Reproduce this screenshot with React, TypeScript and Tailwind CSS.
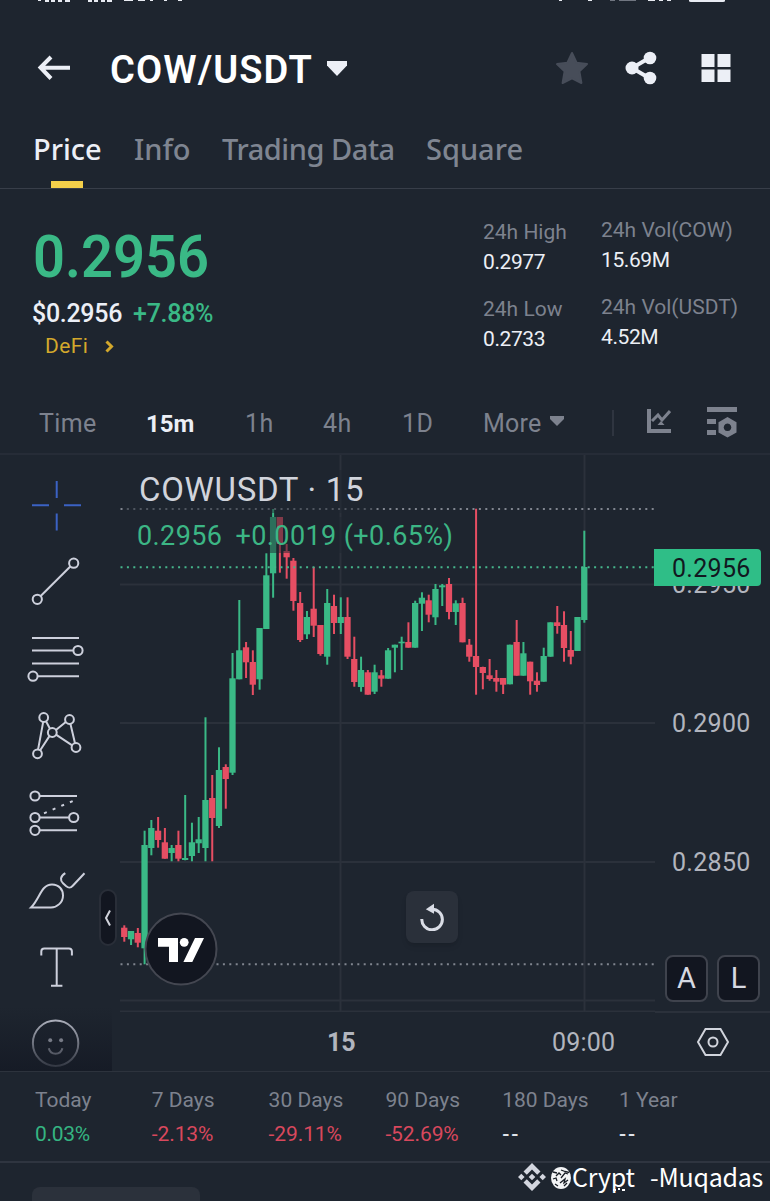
import { ReactNode } from "react";

// high, low, body top, body bottom, direction (1 = up)
const candles = [
  [925.3, 941.7, 927.7, 937, 0],
  [931, 945, 931, 939.3, 1],
  [928, 947.3, 933, 942.7, 0],
  [830.7, 964.3, 845, 948.3, 1],
  [820, 855.3, 828, 848, 1],
  [817, 847.7, 830.7, 840, 0],
  [828, 858.7, 842.3, 858.7, 0],
  [845, 861.3, 848, 853, 1],
  [830.7, 861.3, 845, 858.7, 0],
  [795, 860.3, 858, 860, 1],
  [822.7, 861.3, 842.3, 856, 1],
  [817, 853, 839.3, 843.3, 1],
  [717.3, 861.3, 800, 848, 1],
  [775, 861.3, 798, 818, 0],
  [747.3, 828, 770, 826, 1],
  [764.3, 808.7, 767, 779, 0],
  [653, 775, 678.3, 772.7, 1],
  [600, 679.3, 650.3, 679.3, 1],
  [642, 678, 647.3, 662.3, 0],
  [650.3, 695, 662, 684.7, 0],
  [628, 689.7, 628, 679.3, 1],
  [553.3, 629, 575.3, 629, 1],
  [509, 597.7, 517, 573.3, 1],
  [517, 572.7, 517, 544, 0],
  [544, 578.7, 551, 557.3, 0],
  [558, 610.7, 560.7, 601, 0],
  [592, 642, 603, 640, 0],
  [611, 639, 617, 634.3, 1],
  [567, 637, 608.7, 625.7, 0],
  [625, 655.7, 625, 654, 0],
  [589, 664.7, 603, 656.7, 1],
  [594.7, 634, 606, 623, 0],
  [597.3, 634, 617, 623, 1],
  [597.3, 659, 617, 656.7, 0],
  [636.7, 686.7, 659, 682, 0],
  [656.7, 691.7, 670, 687, 1],
  [670, 694.7, 672.3, 694.7, 0],
  [664.7, 694, 672.3, 691.7, 1],
  [670, 686.7, 675.3, 678.7, 0],
  [648, 678.7, 650.3, 678.7, 1],
  [644.7, 672.3, 644.7, 647.7, 1],
  [636.7, 670, 641.7, 643.3, 1],
  [622.3, 647.7, 642, 647.7, 0],
  [600.7, 647.7, 603, 647.7, 1],
  [592.3, 631, 597.7, 603.7, 1],
  [594.7, 622.3, 600.3, 614.7, 0],
  [584, 625, 589, 617.3, 1],
  [584, 606, 585.3, 587.3, 1],
  [578, 619.3, 584, 612, 0],
  [600.3, 625, 603.3, 612, 1],
  [597.7, 642.3, 603, 642.3, 0],
  [639, 661.7, 644.7, 656.7, 0],
  [508.7, 694.7, 656, 667, 0],
  [666.7, 689.3, 667, 673, 0],
  [659, 680.7, 675.3, 679, 0],
  [670, 691.7, 678, 681.7, 0],
  [678, 694, 678, 684.7, 0],
  [644.7, 684.3, 644.7, 684.3, 1],
  [620, 675.7, 642, 675.7, 0],
  [642, 675.7, 653.3, 675.7, 1],
  [661.7, 694.7, 661.7, 681.3, 0],
  [672.3, 691.7, 680.7, 685, 0],
  [647.7, 681.7, 656, 681.7, 1],
  [622.3, 656.7, 622.3, 656.7, 1],
  [606, 633.7, 622.3, 626, 0],
  [611.3, 661.7, 625, 648, 0],
  [631, 664.3, 650, 656.7, 0],
  [617, 651, 617, 651, 1],
  [530.7, 622.7, 567, 620, 1],
];

const changes = [
  { label: "Today", value: "0.03%", color: "tracking-[-0.3px] text-[#35b582]" },
  { label: "7 Days", value: "-2.13%", color: "tracking-[-0.1px] text-[#d9485d]" },
  { label: "30 Days", value: "-29.11%", color: "tracking-[-0.1px] text-[#d9485d]" },
  { label: "90 Days", value: "-52.69%", color: "tracking-[-0.1px] text-[#d9485d]" },
  { label: "180 Days", value: "--", color: "tracking-[2px] font-medium text-[#dfe3ea]" },
  { label: "1 Year", value: "--", color: "tracking-[2px] font-medium text-[#dfe3ea]" },
];

function Tool({ children }: { children: ReactNode }) {
  return (
    <svg
      viewBox="-56 -38.5 112 77"
      className="h-[77px] w-[112px] shrink-0 fill-none stroke-[#cdd0dc] stroke-2"
    >
      {children}
    </svg>
  );
}

function Toolbar() {
  return (
    <div className="relative flex w-[112px] shrink-0 flex-col overflow-hidden pt-[12px]">
      <Tool>
        <path d="M.7-24.5v17M.7 8v17M-24-.3h17M8-.3h17" className="stroke-[#3b62c4]" />
      </Tool>
      <Tool>
        <circle cx="17.7" cy="-19.3" r="4.6" />
        <circle cx="-18.7" cy="16.8" r="4.6" />
        <path d="M-15.3 13.500 14.3-16" />
      </Tool>
      <Tool>
        <path d="M-24-21.500H23M-24-9H17M-24 4H23M-18 16.700H23" />
        <circle cx="22" cy="-9" r="4.6" />
        <circle cx="-23" cy="16.700" r="4.6" />
      </Tool>
      <Tool>
        <circle cx="-12.3" cy="-19" r="4.4" />
        <circle cx="13.5" cy="-17" r="4.4" />
        <circle cx="-3.7" cy="-4" r="4.4" />
        <circle cx="20" cy="11" r="4.4" />
        <circle cx="-18.5" cy="17.3" r="4.4" />
        <path d="M-12.8-14.6-17.9 12.9M-10-15.2-6-7.8M-.1-6.5 9.8-14.6M14.4-12.7 19 6.7M16.2 8.8 0-1.8M-6.4-.6-15.8 13.8" />
      </Tool>
      <Tool>
        <circle cx="-21" cy="-17.5" r="4.6" />
        <circle cx="-21" cy="4" r="4.6" />
        <circle cx="17.7" cy="4" r="4.6" />
        <circle cx="-21" cy="16.8" r="4.6" />
        <path d="M-16.4-17.5H21M-16.4 4H13M-16.4 16.8H21" />
        <path d="M-12-.2 18-13" strokeDasharray="3 6.4" />
      </Tool>
      <Tool>
        <path d="M-25 17C-16 8-15-6-4-6 3-6 7-1 7 5 7 12 1 17-5 17Z" />
        <path d="M9.3-17.3C4-14 4-10 7-7.3L10-4.5C13-2 14.5-2.2 17-5L28.5-17.3" />
      </Tool>
      <Tool>
        <path d="M-14.7-12v-4q0-3 3-3h24.6q3 0 3 3v4M.7-19v37.3M-5 18.3H6.4" />
      </Tool>
      <Tool>
        <circle cx="-.4" cy="-1.3" r="22.7" />
        <path d="M-7.2 3.7C-5.5 11 4.6 11 6.4 3.7" />
        <circle cx="-5.8" cy="-4.3" r="2" className="fill-[#cdd0dc] stroke-none" />
        <circle cx="5.1" cy="-4.3" r="2" className="fill-[#cdd0dc] stroke-none" />
      </Tool>
      <div className="absolute inset-x-0 bottom-0 h-[64px] bg-linear-to-b from-[#151a25]/0 to-[#151a25]/90" />
    </div>
  );
}

function Plot() {
  return (
    <svg viewBox="112 455 543 557" className="block h-[557px] w-[543px]">
      <g className="fill-none stroke-[#2b313b] stroke-2">
        <path d="M120 584.5H655M120 723H655M120 862H655M120 1000.5H655M120 1011.5H655" />
        <path d="M340.5 455V1012M584.5 455V1012" />
      </g>
      <path d="M120.5 509H655M120.5 964.3H655" className="stroke-[#80858f] stroke-2" strokeDasharray="2 4.4" />
      {candles.map(([high, low, top, bottom, up], i) => (
        <g key={i} className={up ? "fill-[#3ab986]" : "fill-[#e64e63]"}>
          <rect x={123.3 + i * 6.765} y={high} width="2" height={low - high} />
          <rect x={121.1 + i * 6.765} y={top} width="6.3" height={bottom - top} />
        </g>
      ))}
      <path d="M120.5 567.2H655" className="stroke-[#46b68c] stroke-2" strokeDasharray="2 4.4" />
    </svg>
  );
}

function Chart() {
  return (
    <div className="relative flex h-[617px] border-b border-[#2d333d]">
      <Toolbar />
      <div className="relative w-[543px] shrink-0">
        <Plot />
        <div className="absolute left-[15px] top-[15px] h-[43px] w-[248px] bg-[#1e252f]/50 pl-[12px] text-[33px] leading-[40px] tracking-[0.7px] whitespace-pre text-[#d1d4dc]">
          COWUSDT · 15
        </div>
        <div className="absolute left-[15px] top-[62px] h-[36px] w-[335px] bg-[#1e252f]/50 pl-[10px] text-[27px] leading-[38px] tracking-[0.4px] whitespace-pre text-[#3cb685]">
          0.2956 <span className="ml-[6px]">+0.0019 (+0.65%)</span>
        </div>
        <svg viewBox="0 0 74 74" className="absolute left-[32px] top-[457px] size-[74px]">
          <circle cx="37" cy="37" r="35.5" className="fill-[#121620] stroke-[#444751] stroke-2" />
          <path d="M14 26h20v24h-9V34.7H14zM51 26h9L48.3 50h-8.9z" className="fill-white" />
          <circle cx="40.2" cy="30.3" r="4.4" className="fill-white" />
        </svg>
        <div className="absolute left-[294px] top-[436px] flex size-[52px] items-center justify-center rounded-lg bg-[#2a303a] shadow-md">
          <svg viewBox="0 0 26 28" className="h-[28px] w-[26px]">
            <path d="M2.8 16A10.3 10.3 0 1 0 13 6.2" className="fill-none stroke-[#dadde6] stroke-[3px]" />
            <path d="M6.8 6.2 15 .8v10z" className="fill-[#dadde6]" />
          </svg>
        </div>
        <div className="flex h-[59px] items-center pt-[2px] text-[25px] text-[#b2b5be]">
          <span className="w-[243px] pl-[215px] font-bold">15</span>
          <span className="pl-[197px] tracking-[0.2px]">09:00</span>
        </div>
      </div>
      <div className="relative flex flex-1 flex-col pt-[60px] text-[25px] text-[#b2b5be]">
        <span className="flex h-[139px] items-center pl-[17px] tracking-[0.3px]">0.2950</span>
        <span className="flex h-[139px] items-center pl-[17px] tracking-[0.3px]">0.2900</span>
        <span className="flex h-[139px] items-center pl-[17px] tracking-[0.3px]">0.2850</span>
        <div className="absolute -left-px top-[94px] flex h-[37px] w-[107px] items-center rounded-r-[4px] bg-[#2fbe87] pl-[18px] pt-[2px] tracking-[0.3px] text-[#12181f]">
          0.2956
        </div>
        <div className="mt-[23px] flex gap-[9px] pl-[10px] text-[29px] text-[#d6d9e2]">
          <span className="flex h-[47px] w-[43px] items-center justify-center rounded-lg border-2 border-[#3f434d] bg-[#121620]">A</span>
          <span className="flex h-[47px] w-[43px] items-center justify-center rounded-lg border-2 border-[#3f434d] bg-[#121620]">L</span>
        </div>
        <div className="mt-[9px] flex flex-1 items-center border-t-2 border-[#2b313b] pl-[42px]">
          <svg viewBox="0 0 32 28" className="h-[28px] w-[32px] fill-none stroke-[#d1d4dc] stroke-2">
            <path d="M8.5 1h15L31 14l-7.5 13h-15L1 14z" />
            <circle cx="16" cy="14" r="4.5" />
          </svg>
        </div>
      </div>
      <div className="absolute left-[99px] top-[434px] flex h-[57px] w-[18px] items-center justify-center rounded-[9px] border-2 border-[#292e38] bg-[#121620]">
        <svg viewBox="0 0 8 16" className="h-[16px] w-[8px] shrink-0 fill-none stroke-[#d1d4dc] stroke-2">
          <path d="M6 .5 2 8l4 7.5" />
        </svg>
      </div>
    </div>
  );
}

function Stat({ label, value }: { label: string; value: string }) {
  return (
    <div className="h-[77px] whitespace-nowrap">
      <p className="text-[21px] leading-[30px] text-[#7d828e]">{label}</p>
      <p className="text-[21px] leading-[30px] tracking-[-0.4px] text-[#eceff5]">{value}</p>
    </div>
  );
}

export default function App() {
  return (
    <div className="flex h-[1201px] w-[770px] flex-col overflow-hidden bg-[#1e252f] font-['Roboto',sans-serif] text-white">
      <svg viewBox="0 0 770 8" className="h-[8px] w-full shrink-0 fill-[#e8ebf2]">
        <path d="M38 0h3v1h-3zM45 0h4v2h-4zM51 0h4v2h-4zM58 0h4v2h-4zM65 0h5v2h-5zM88 0h4v2h-4zM94 0h4v2h-4zM101 0h4v2h-4zM107 0h5v2h-5zM124 0h9v1h-9zM138 0h7v1h-7zM150 0h3v1h-3zM164 0h3v1h-3zM178 0h4v1h-4z" />
        <path d="M559 0h3v1h-3zM588 0h4v1h-4zM648 0h7v1h-7zM659 0h4v1h-4zM667 0h4v1h-4zM689 0h36v1q0 1-2 1h-32q-2 0-2-1z" />
        <path d="M610 0h5v1h-5zM619 0h17v1h-17z" className="fill-[#717681]" />
      </svg>

      <div className="flex h-[122px] shrink-0 items-center pl-[36px] pr-[39px]">
        <svg viewBox="0 0 34 26" className="h-[26px] w-[34px] -translate-y-px fill-none stroke-[#eceff6] stroke-4">
          <path d="M15 2 4.5 12.5 15 23.5M4 12.8H34" />
        </svg>
        <h1 className="ml-[40px] w-[203px] pt-[2px] whitespace-nowrap text-[38px] font-semibold tracking-[1.1px]">COW/USDT</h1>
        <svg viewBox="0 0 20 16" className="ml-[14px] h-[16px] w-[20px] fill-[#eceff6]">
          <path d="M0 0h20v4.500L10 15 0 4.500z" />
        </svg>
        <div className="ml-auto flex -translate-y-px items-center">
          <svg viewBox="0 0 34 34" className="size-[34px] fill-[#474d59] stroke-[#474d59] stroke-2" strokeLinejoin="round">
            <path d="M17 2l4.6 9.7 10.4 1.4-7.6 7.3 2 11.6L17 27.400 7.6 32l2-11.6L2 13.1l10.4-1.4z" />
          </svg>
          <svg viewBox="0 0 32 34" className="ml-[36px] h-[34px] w-[32px] fill-[#eceff6]">
            <path d="M25 6.5 7 17l18 10.5" className="fill-none stroke-[#eceff6] stroke-4" />
            <circle cx="7" cy="17" r="6.5" />
            <circle cx="25" cy="7" r="6.3" />
            <circle cx="25" cy="27" r="6.3" />
          </svg>
          <svg viewBox="0 0 30 30" className="ml-[44px] size-[30px] fill-[#eceff6]">
            <path d="M.5 1h13v13H.5zM16.5 1h13v13h-13zM.5 16.5h13v12.5H.5zM16.5 16.5h13v12.5h-13z" />
          </svg>
        </div>
      </div>

      <div className="flex h-[59px] shrink-0 border-b border-[#383e49] pl-[33px] font-['Noto_Sans',sans-serif] text-[29px] font-medium leading-[38px] whitespace-nowrap text-[#7f8591]">
        <div className="relative w-[101px] text-[#eceff6]">
          Price
          <span className="absolute left-[18px] top-[51px] h-[7px] w-[32px] bg-[#f5d04a]" />
        </div>
        <span className="w-[88px]">Info</span>
        <span className="w-[204px] tracking-[-0.45px]">Trading Data</span>
        <span>Square</span>
      </div>

      <div className="flex h-[203px] shrink-0">
        <div className="w-[483px] pl-[32px] pt-[32px]">
          <p className="origin-left scale-x-95 pl-px text-[59px] font-semibold leading-[72px] text-[#3ab986]">0.2956</p>
          <p className="mt-[5px] text-[25px] font-medium leading-[32px] tracking-[-0.3px]">
            <span className="text-[#eceff6]">$0.2956</span>
            <span className="ml-[11px] text-[#3ab986]">+7.88%</span>
          </p>
          <p className="flex h-[34px] items-center pl-[13px] text-[21px] tracking-[0.4px] text-[#d3a82c]">
            DeFi
            <svg viewBox="0 0 9 13" className="ml-[17px] h-[13px] w-[9px] -translate-y-px fill-none stroke-[#d3a82c] stroke-3">
              <path d="M1.5 1.5l5 5-5 5" />
            </svg>
          </p>
        </div>
        <div className="w-[118px] pt-[28px]">
          <Stat label="24h High" value="0.2977" />
          <Stat label="24h Low" value="0.2733" />
        </div>
        <div className="pt-[26px]">
          <Stat label="24h Vol(COW)" value="15.69M" />
          <Stat label="24h Vol(USDT)" value="4.52M" />
        </div>
      </div>

      <div className="flex h-[63px] shrink-0 items-center border-b-2 border-[#262c37] pl-[39px] pt-[2px] text-[25px] tracking-[0.4px] text-[#7d828e]">
        <span className="w-[107px]">Time</span>
        <span className="w-[99px] text-[24px] font-bold tracking-normal text-[#eceff6]">15m</span>
        <span className="w-[78px]">1h</span>
        <span className="w-[79px]">4h</span>
        <span className="w-[81px]">1D</span>
        <span className="w-[67px] tracking-[0.2px]">More</span>
        <svg viewBox="0 0 14 12" className="h-[12px] w-[14px] -translate-y-[3px] fill-[#7d828e]">
          <path d="M0 1h14v3L7 11 0 4z" />
        </svg>
        <span className="ml-[48px] h-[26px] w-[2px] -translate-y-px bg-[#2f3540]" />
        <svg viewBox="0 0 24 24" className="ml-[33px] size-[24px] -translate-y-[3px] fill-none stroke-[#7d828e]">
          <path d="M2 0v22h22" className="stroke-4" />
          <path d="M5 12l6-6 4 5 8-9" className="stroke-3" />
          <path d="M10.5 16h7l-3.5-4z" className="fill-[#7d828e] stroke-none" />
        </svg>
        <svg viewBox="0 0 30 31" className="ml-[36px] h-[31px] w-[30px] -translate-y-px fill-[#7d828e]">
          <path d="M0 0h30v5H0zM0 12h9v5H0zM0 23h9v5H0z" />
          <path d="M20.5 10l9 5.2v10.2l-9 5.2-9-5.2V15.2zM20.5 16.5a3.8 3.8 0 1 0 .01 0z" fillRule="evenodd" />
        </svg>
      </div>

      <Chart />

      <div className="flex h-[91px] shrink-0 border-b-2 border-[#2f3540] pl-[35px] pt-[13px]">
        {changes.map((item) => (
          <div key={item.label} className="w-[116.8px] text-[21px] whitespace-nowrap">
            <p className="leading-[30px] text-[#7d828e]">{item.label}</p>
            <p className={`mt-[4px] leading-[30px] ${item.color}`}>{item.value}</p>
          </div>
        ))}
      </div>

      <div className="relative flex h-[38px] shrink-0 items-start">
        <div className="ml-[32px] mt-[24px] h-[40px] w-[168px] shrink-0 rounded-lg bg-[#2b313b]" />
        <div className="ml-[318px] flex h-[28px] items-center font-['Noto_Sans_CJK_SC',sans-serif] text-[25px] tracking-[-0.25px] whitespace-nowrap text-white">
          <svg viewBox="0 0 28 28" className="size-[28px] shrink-0 fill-[#d3d6df]">
            <path d="M14 0l8.5 8.5-3.3 3.3L14 6.6l-5.2 5.2-3.3-3.3zM14 28l8.5-8.5-3.3-3.3L14 21.4l-5.2-5.2-3.3 3.3zM14 10.7l3.3 3.3-3.3 3.3-3.3-3.3zM3.3 10.7L6.6 14l-3.3 3.3L0 14zM24.7 10.7L28 14l-3.3 3.3-3.3-3.3z" />
          </svg>
          <svg viewBox="0 0 22 24" className="ml-[4px] h-[24px] w-[22px] shrink-0 translate-y-px">
            <ellipse cx="11" cy="12" rx="10" ry="11" className="fill-[#f3f4f6]" />
            <path
              d="M3 6l4 1M6 10l3-3 2 2M11 4l4 1.500 4 1M11 12l4-5 3 1M3 13l3-1 1 3M10 17l5-4-1 4 4-3M5 18l3 2M14 20l3-3"
              className="fill-none stroke-[#161b23] stroke-[1.3px]"
            />
          </svg>
          <span className="w-[78px]">Crypt</span>
          <span>-Muqadas</span>
        </div>
        <svg viewBox="0 0 12 4" className="absolute left-[613px] top-[25px] h-[4px] w-[12px] fill-white">
          <path d="M0 1h3v2H0zM5 0h2v2H5zM9 1h3v2H9z" />
        </svg>
      </div>
    </div>
  );
}
